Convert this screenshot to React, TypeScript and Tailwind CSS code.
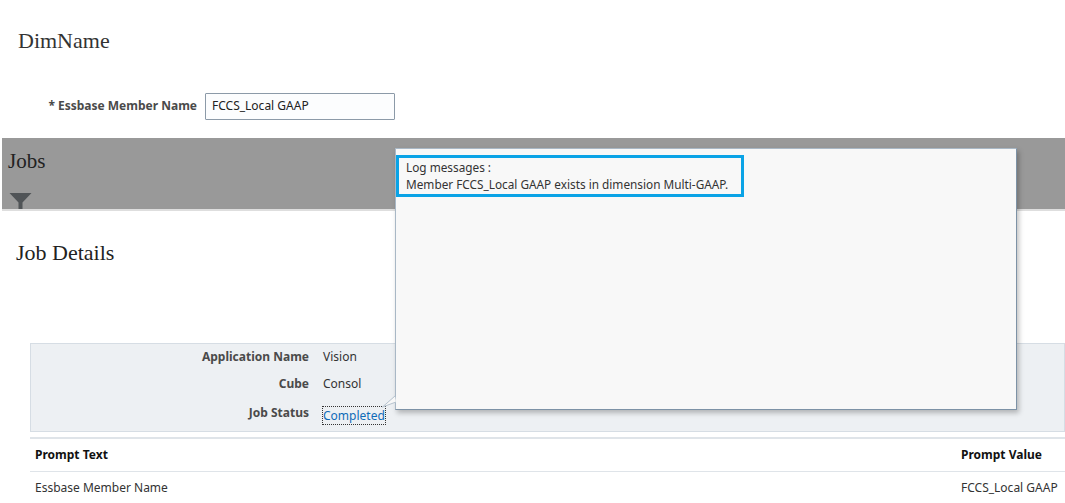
import React from 'react';

const sans = { fontFamily: '"Noto Sans", "Open Sans", Arial, sans-serif' };
const serif = { fontFamily: '"Liberation Serif", "DejaVu Serif", Georgia, serif' };

function Funnel() {
  return (
    <svg width="23" height="16" viewBox="0 0 23 16" className="block">
      <path d="M0.5 0 H22.5 L13.5 9.5 V16 H9.5 V9.5 Z" fill="#505457" />
    </svg>
  );
}

function DetailRow({ label, h, children }: { label: string; h: string; children: React.ReactNode }) {
  return (
    <div className={`flex items-center ${h}`}>
      <div className="w-[278px] text-right font-bold text-[12px] text-[#4a4a4a]">{label}</div>
      <div className="pl-[14px] text-[12px] text-[#333]">{children}</div>
    </div>
  );
}

function LogPopup() {
  return (
    <div className="absolute left-[395px] top-[148px] w-[622px] h-[262px]">
      <div className="w-full h-full bg-[#f8f8f8] border border-[#a9b8c6] border-r-[#7d92a6] border-b-[#7d92a6] shadow-[2px_3px_5px_rgba(0,0,0,0.25)] pt-[6px]">
        <div className="inline-block whitespace-nowrap border-[3px] border-[#0aa3e6] pl-[7px] pr-[13px] py-[1px] text-[11.8px] leading-[17px] text-[#333]">
          <div>Log messages :</div>
          <div>Member FCCS_Local GAAP exists in dimension Multi-GAAP.</div>
        </div>
      </div>
      <svg width="16" height="14" viewBox="0 0 16 14" className="absolute left-[-13px] bottom-[0px] overflow-visible">
        <path d="M13 0 L0.5 11 L14 6" fill="#f8f8f8" stroke="#b6c3cf" strokeWidth="1" />
      </svg>
    </div>
  );
}

export default function App() {
  return (
    <div className="relative w-[1065px] h-[503px] overflow-hidden bg-white text-[#333]" style={sans}>
      {/* Header */}
      <div className="pt-[30px] pl-[18px]">
        <h1 className="text-[22px] leading-[22px] text-[#333]" style={serif}>DimName</h1>
      </div>

      {/* Form */}
      <div className="flex items-center mt-[41px] h-[26px]">
        <label className="w-[197px] text-right font-bold text-[12px] text-[#4a4a4a]">
          <span className="mr-[3px]">*</span>Essbase Member Name
        </label>
        <div className="ml-[8px] w-[190px] h-[27px] border border-[#8c9aa8] rounded-[1px] bg-[#fcfdfe] flex items-center pl-[6px] text-[12px] text-[#222]">
          FCCS_Local GAAP
        </div>
      </div>

      {/* Jobs band */}
      <div className="ml-[2px] mt-[19px] h-[73px] bg-[#999999] border-b-2 border-[#dedede] flex flex-col justify-between">
        <h2 className="pl-[6px] pt-[12px] text-[21px] leading-[22px] text-[#222]" style={serif}>Jobs</h2>
        <div className="pl-[7px]">
          <Funnel />
        </div>
      </div>

      {/* Job Details */}
      <h2 className="pl-[16px] pt-[31px] text-[22px] leading-[22px] text-[#222]" style={serif}>Job Details</h2>

      <div className="ml-[30px] mt-[79px] border border-[#d6dde4] bg-[#edf0f3] pb-[3px]">
        <DetailRow label="Application Name" h="h-[26px]">Vision</DetailRow>
        <DetailRow label="Cube" h="h-[28px]">Consol</DetailRow>
        <DetailRow label="Job Status" h="h-[30px]">
          <span className="text-[#0f6bb8] outline-1 outline-dotted outline-[#333] outline-offset-0 relative top-[3px]">Completed</span>
        </DetailRow>
      </div>

      {/* Prompt table */}
      <div className="ml-[30px] mt-[5px] border-t-2 border-[#dfe4e9]">
        <div className="flex h-[33px] items-center border-b border-[#dfe4e9] font-bold text-[12px] text-[#111]">
          <div className="flex-1 pl-[5px]">Prompt Text</div>
          <div className="w-[104px]">Prompt Value</div>
        </div>
        <div className="flex h-[31px] items-center text-[12px] text-[#333]">
          <div className="flex-1 pl-[5px]">Essbase Member Name</div>
          <div className="w-[104px]">FCCS_Local GAAP</div>
        </div>
      </div>

      <LogPopup />
    </div>
  );
}
